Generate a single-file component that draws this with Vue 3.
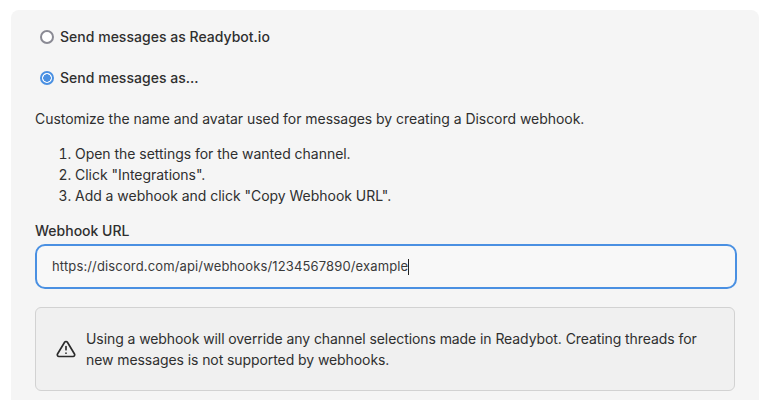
<script setup>
const steps = [
  'Open the settings for the wanted channel.',
  'Click "Integrations".',
  'Add a webhook and click "Copy Webhook URL".'
]
</script>

<template>
  <div class="panel">
    <label class="radio">
      <span class="dot"></span>
      Send messages as Readybot.io
    </label>
    <label class="radio second">
      <span class="dot checked"></span>
      Send messages as...
    </label>
    <p class="intro">Customize the name and avatar used for messages by creating a Discord webhook.</p>
    <ol class="steps">
      <li v-for="step in steps" :key="step">{{ step }}</li>
    </ol>
    <div class="field-label">Webhook URL</div>
    <div class="input">
      <span>https://discord.com/api/webhooks/1234567890/example</span><span class="caret"></span>
    </div>
    <div class="alert">
      <svg class="alert-icon" width="20" height="20" viewBox="0 0 24 24" fill="none" stroke="#2b2b2b" stroke-width="2" stroke-linecap="round" stroke-linejoin="round">
        <path d="M10.3 3.9 1.8 18a2 2 0 0 0 1.7 3h17a2 2 0 0 0 1.7-3L13.7 3.9a2 2 0 0 0-3.4 0z" />
        <path d="M12 9v4" />
        <path d="M12 17h.01" />
      </svg>
      <div class="alert-text">Using a webhook will override any channel selections made in Readybot. Creating threads for new messages is not supported by webhooks.</div>
    </div>
  </div>
</template>

<style>
html, body {
  margin: 0;
  background: #fff;
}
</style>

<style scoped>
.panel {
  box-sizing: border-box;
  width: 748px;
  height: 390px;
  margin: 10px 0 0 11px;
  padding: 16px 24px 0;
  background: #f5f5f5;
  border-radius: 8px 8px 0 0;
  font-family: Inter, "Liberation Sans", sans-serif;
  font-size: 14px;
  line-height: 21px;
  color: #2f2f2f;
}
.radio {
  display: flex;
  align-items: center;
  gap: 6px;
  margin-left: 5px;
  font-weight: 500;
  height: 21px;
  letter-spacing: 0.02px;
}
.second {
  margin-top: 20px;
}
.dot {
  box-sizing: border-box;
  width: 14px;
  height: 14px;
  border: 2px solid #8a8a94;
  border-radius: 50%;
  background: #fff;
}
.checked {
  border-color: #4a90e2;
  background: radial-gradient(circle, #4a90e2 0 3.5px, #fff 4px);
}
.intro {
  margin: 20px 0 0;
  letter-spacing: -0.04px;
}
.steps {
  margin: 14px 0 0;
  padding-left: 40px;
  letter-spacing: -0.03px;
}
.field-label {
  margin-top: 14px;
  font-weight: 500;
}
.input {
  box-sizing: border-box;
  display: flex;
  align-items: center;
  height: 45px;
  width: 702px;
  margin-top: 3px;
  padding: 0 15px;
  background: #f8f8f8;
  border: 2px solid #4a90e2;
  border-radius: 10px;
  font-size: 13px;
  letter-spacing: 0.14px;
  color: #3a3a3a;
}
.caret {
  width: 1px;
  height: 16px;
  margin-left: 0;
  background: #222;
}
.alert {
  box-sizing: border-box;
  display: flex;
  align-items: center;
  gap: 10px;
  width: 700px;
  height: 84px;
  margin-top: 18px;
  padding: 0 20px;
  background: #f0f0f0;
  border: 1px solid #d2d2d2;
  border-radius: 6px;
}
.alert-icon {
  flex-shrink: 0;
}
.alert-text {
  letter-spacing: -0.08px;
}
</style>
